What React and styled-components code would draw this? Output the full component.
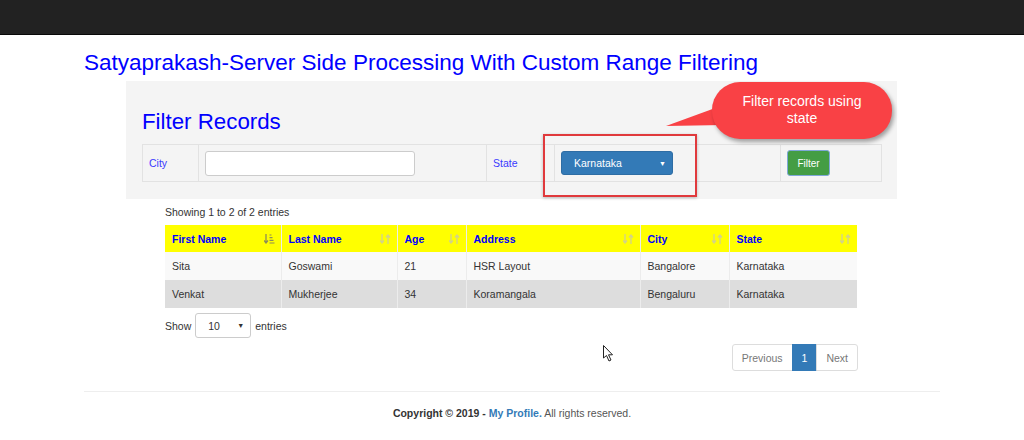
import React from 'react';
import styled, { createGlobalStyle } from 'styled-components';

const GlobalStyle = createGlobalStyle`
  html, body {
    margin: 0;
    padding: 0;
    background: #fff;
    font-family: "Liberation Sans", Arial, sans-serif;
    color: #333;
  }
`;

const Page = styled.div`
  position: relative;
  width: 1024px;
  height: 440px;
  overflow: hidden;
`;

const Navbar = styled.div`
  height: 34px;
  background: #222;
  border-bottom: 1px solid #080808;
`;

const Container = styled.div`
  width: 856px;
  margin: 0 auto;
`;

const Title = styled.h1`
  margin: 15px 0 0;
  font-size: 22.5px;
  font-weight: normal;
  line-height: 26px;
  color: #0000ff;
`;

const Panel = styled.div`
  position: relative;
  width: 771px;
  margin: 5px 0 0 42px;
  padding: 28px 15px 17px 16px;
  box-sizing: border-box;
  background: #f4f4f4;
`;

const PanelTitle = styled.h2`
  margin: 0 0 9px;
  font-size: 22.3px;
  font-weight: normal;
  line-height: 26px;
  color: #0000ff;
`;

const FilterTable = styled.div`
  display: grid;
  grid-template-columns: 55px 288px 68px 226px 1fr;
  height: 38px;
  border: 1px solid #e2e2e2;
  box-sizing: border-box;
`;

const FilterCell = styled.div`
  display: flex;
  align-items: center;
  padding: 0 6px;
  border-left: ${(p) => (p.$first ? 'none' : '1px solid #e2e2e2')};
  font-size: 10.5px;
  color: #3a3aff;
`;

const TextInput = styled.div`
  width: 210px;
  height: 25px;
  box-sizing: border-box;
  background: #fff;
  border: 1px solid #ccc;
  border-radius: 3px;
`;

const StateSelect = styled.div`
  display: flex;
  align-items: center;
  justify-content: space-between;
  width: 112px;
  height: 24px;
  box-sizing: border-box;
  padding: 0 6px 0 12px;
  background: #337ab7;
  border: 1px solid #2e6da4;
  border-radius: 3px;
  color: #fff;
  font-size: 10.5px;
`;

const Caret = styled.span`
  font-size: 7px;
  color: ${(p) => p.$color || '#fff'};
`;

const FilterButton = styled.div`
  display: flex;
  align-items: center;
  justify-content: center;
  width: 43px;
  height: 26px;
  box-sizing: border-box;
  background: #449d44;
  border: 1px solid #7fa7d8;
  border-radius: 3px;
  color: #fff;
  font-size: 10px;
`;

const Highlight = styled.div`
  position: absolute;
  left: 417px;
  top: 53px;
  width: 154px;
  height: 63px;
  box-sizing: border-box;
  border: 2px solid #e0393c;
  box-shadow: 0 1px 3px rgba(0, 0, 0, 0.25);
`;

const Callout = styled.div`
  position: absolute;
  left: 586px;
  top: 1px;
  width: 180px;
  height: 57px;
  padding-top: 11px;
  box-sizing: border-box;
  background: #f94145;
  border-radius: 28px;
  box-shadow: 2px 3px 4px rgba(0, 0, 0, 0.35);
  color: #fff;
  font-size: 14px;
  line-height: 17px;
  text-align: center;
`;

const CalloutTail = styled.svg`
  position: absolute;
  left: 540px;
  top: 22px;
`;

const Records = styled.div`
  width: 692px;
  margin: 6px 0 0 81px;
`;

const Info = styled.div`
  font-size: 10.5px;
  color: #333;
  line-height: 14px;
`;

const Table = styled.table`
  width: 100%;
  margin-top: 6px;
  border-collapse: collapse;
  font-size: 10.5px;
  table-layout: fixed;
`;

const Th = styled.th`
  position: relative;
  height: 27px;
  padding: 0 7px;
  background: #ffff00;
  color: #0000ff;
  font-weight: bold;
  text-align: left;
  border-left: 1px solid #ececec;
  &:first-child {
    border-left: none;
  }
`;

const SortIcon = styled.svg`
  position: absolute;
  right: 6px;
  top: 9px;
`;

const Tr = styled.tr`
  background: ${(p) => (p.$odd ? '#f9f9f9' : '#dddddd')};
`;

const Td = styled.td`
  height: 28px;
  padding: 0 7px;
  color: #333;
  border-left: 1px solid #ececec;
  &:first-child {
    border-left: none;
  }
`;

const Footerish = styled.div`
  display: flex;
  justify-content: space-between;
  align-items: flex-start;
  margin-top: 5px;
`;

const Length = styled.div`
  display: flex;
  align-items: center;
  gap: 4px;
  font-size: 10.5px;
  color: #333;
`;

const LengthSelect = styled.div`
  display: flex;
  align-items: center;
  justify-content: space-between;
  width: 56px;
  height: 25px;
  box-sizing: border-box;
  padding: 0 6px 0 12px;
  border: 1px solid #ccc;
  border-radius: 3px;
  background: #fff;
  font-size: 10.5px;
`;

const Pager = styled.div`
  display: flex;
  margin-top: 31px;
  margin-right: -1px;
`;

const PageItem = styled.div`
  display: flex;
  align-items: center;
  justify-content: center;
  height: 25px;
  padding: 0 ${(p) => p.$pad}px;
  border: 1px solid ${(p) => (p.$active ? '#337ab7' : '#ddd')};
  margin-left: -1px;
  background: ${(p) => (p.$active ? '#337ab7' : '#fff')};
  color: ${(p) => (p.$active ? '#fff' : '#777')};
  font-size: 10.5px;
  &:first-child {
    border-radius: 3px 0 0 3px;
  }
  &:last-child {
    border-radius: 0 3px 3px 0;
  }
`;

const Rule = styled.hr`
  margin: 20px 0 0;
  border: 0;
  border-top: 1px solid #eee;
`;

const Copyright = styled.p`
  margin: 15px 0 0;
  text-align: center;
  font-size: 10.5px;
  color: #555;
  b {
    color: #333;
  }
  a {
    color: #337ab7;
    font-weight: bold;
    text-decoration: none;
  }
`;

const Cursor = styled.svg`
  position: absolute;
  left: 603px;
  top: 345px;
`;

function Sort({ active }) {
  const c = active ? '#8c8c5a' : '#d2d28c';
  return (
    <SortIcon width="11" height="10" viewBox="0 0 11 10">
      <path d="M2 0 V9 M0 6.5 L2 9 L4 6.5" stroke={c} strokeWidth="1.3" fill="none" />
      {active ? (
        <path d="M5.5 1 H7.5 M5.5 3.7 H8.5 M5.5 6.4 H9.5 M5.5 9 H10.5" stroke={c} strokeWidth="1.2" />
      ) : (
        <path d="M8 10 V1 M6 3.5 L8 1 L10 3.5" stroke={c} strokeWidth="1.3" fill="none" />
      )}
    </SortIcon>
  );
}

const columns = [
  { name: 'First Name', width: 116, active: true },
  { name: 'Last Name', width: 116 },
  { name: 'Age', width: 69 },
  { name: 'Address', width: 174 },
  { name: 'City', width: 89 },
  { name: 'State' },
];

const rows = [
  ['Sita', 'Goswami', '21', 'HSR Layout', 'Bangalore', 'Karnataka'],
  ['Venkat', 'Mukherjee', '34', 'Koramangala', 'Bengaluru', 'Karnataka'],
];

export default function App() {
  return (
    <Page>
      <GlobalStyle />
      <Navbar />
      <Container>
        <Title>Satyaprakash-Server Side Processing With Custom Range Filtering</Title>
        <Panel>
          <PanelTitle>Filter Records</PanelTitle>
          <FilterTable>
            <FilterCell $first>City</FilterCell>
            <FilterCell>
              <TextInput />
            </FilterCell>
            <FilterCell>State</FilterCell>
            <FilterCell>
              <StateSelect>
                Karnataka
                <Caret>▼</Caret>
              </StateSelect>
            </FilterCell>
            <FilterCell>
              <FilterButton>Filter</FilterButton>
            </FilterCell>
          </FilterTable>
          <Highlight />
          <CalloutTail width="60" height="30" viewBox="0 0 60 30">
            <polygon points="0,23 52,4 58,22" fill="#f94145" />
          </CalloutTail>
          <Callout>
            Filter records using
            <br />
            state
          </Callout>
        </Panel>
        <Records>
          <Info>Showing 1 to 2 of 2 entries</Info>
          <Table>
            <colgroup>
              {columns.map((c) => (
                <col key={c.name} style={c.width ? { width: c.width } : undefined} />
              ))}
            </colgroup>
            <thead>
              <tr>
                {columns.map((c) => (
                  <Th key={c.name}>
                    {c.name}
                    <Sort active={c.active} />
                  </Th>
                ))}
              </tr>
            </thead>
            <tbody>
              {rows.map((r, i) => (
                <Tr key={r[0]} $odd={i % 2 === 0}>
                  {r.map((v, j) => (
                    <Td key={j}>{v}</Td>
                  ))}
                </Tr>
              ))}
            </tbody>
          </Table>
          <Footerish>
            <Length>
              Show
              <LengthSelect>
                10
                <Caret $color="#333">▼</Caret>
              </LengthSelect>
              entries
            </Length>
            <Pager>
              <PageItem $pad={9}>Previous</PageItem>
              <PageItem $pad={9} $active>1</PageItem>
              <PageItem $pad={9}>Next</PageItem>
            </Pager>
          </Footerish>
        </Records>
        <Rule />
        <Copyright>
          <b>Copyright © 2019 - </b>
          <a href="#">My Profile.</a> All rights reserved.
        </Copyright>
      </Container>
      <Cursor width="12" height="18" viewBox="0 0 12 18">
        <path d="M0.5 0.5 L0.5 13 L3.5 10.5 L6 16 L8 15 L5.5 9.8 L9.5 9.8 Z" fill="#fff" stroke="#222" strokeWidth="1" />
      </Cursor>
    </Page>
  );
}
